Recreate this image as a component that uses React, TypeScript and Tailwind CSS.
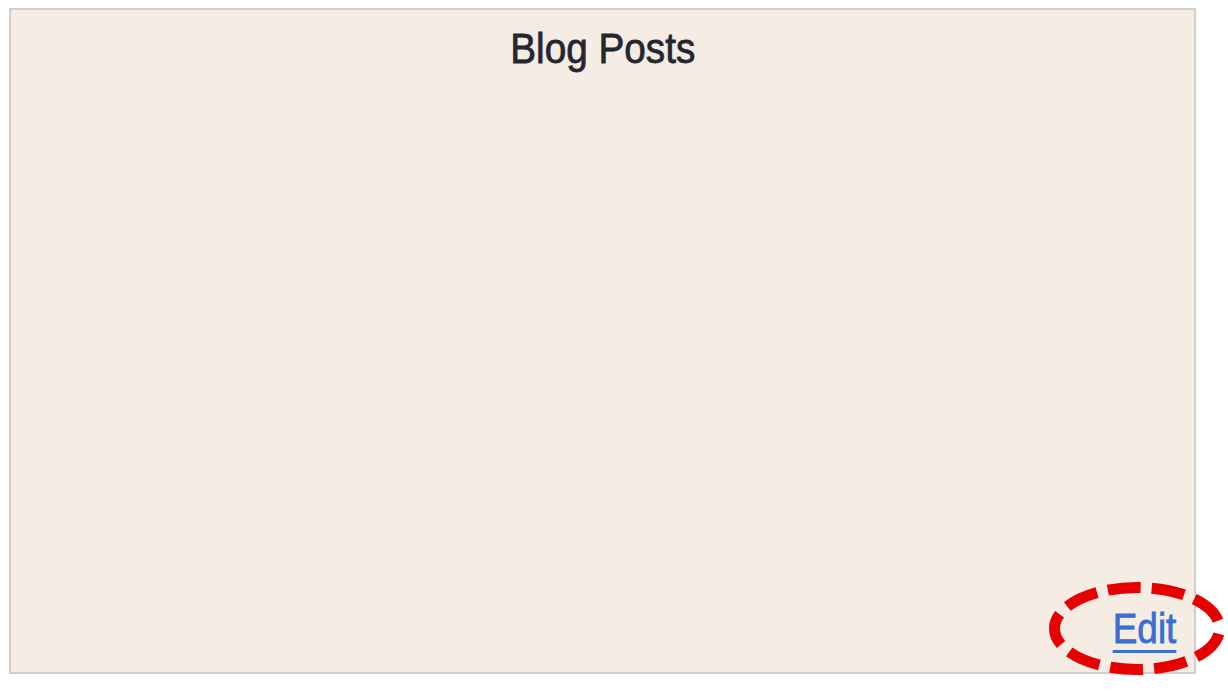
import React from "react";

export default function App() {
  return (
    <div className="relative w-[1228px] h-[694px] bg-white pl-[9px] pt-[8px] overflow-hidden" style={{ fontFamily: '"Liberation Sans", Arial, sans-serif' }}>
      <div className="flex flex-col justify-between w-[1187px] h-[666px] border-2 border-[#cfcfcf] bg-[#f5ede4] pt-[17px] pb-[22px]">
        <div className="flex justify-center">
          <h2 className="text-[43px] leading-none text-[#262630] scale-x-[0.9] origin-center [-webkit-text-stroke:0.8px]">Blog Posts</h2>
        </div>
        <div className="flex justify-end pr-[18px]">
          <a href="#" className="text-[42px] leading-none text-[#3b6fcf] underline decoration-[3px] underline-offset-[7px] scale-x-[0.88] origin-right [-webkit-text-stroke:0.8px]">Edit</a>
        </div>
      </div>
      <svg className="absolute left-[1045px] top-[578px]" width="183" height="102" viewBox="0 0 183 102">
        <ellipse cx="92" cy="50.5" rx="82.5" ry="41" fill="none" stroke="#e60000" strokeWidth="11" strokeDasharray="33 11" strokeDashoffset="38.5" />
      </svg>
    </div>
  );
}
